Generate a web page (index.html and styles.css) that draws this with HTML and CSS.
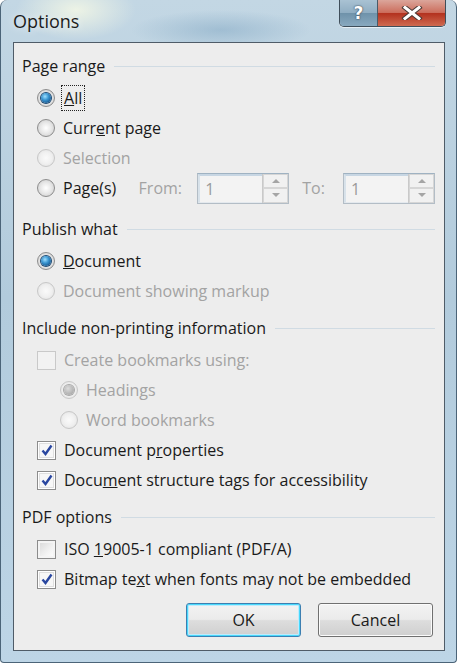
FILE: index.html
```html
<!DOCTYPE html>
<html>
<head>
<meta charset="utf-8">
<link rel="stylesheet" href="styles.css">
</head>
<body>
<div class="window">
  <div class="titlebar">
    <span class="title">Options</span>
    <div class="caption-btns">
      <div class="cap-help">?</div>
      <div class="cap-close">
        <svg width="22" height="14" viewBox="0 0 22 14"><path d="M4 1.5 L18 12.5 M18 1.5 L4 12.5" stroke="#4a3a36" stroke-width="5" stroke-linecap="square"/><path d="M4 1.5 L18 12.5 M18 1.5 L4 12.5" stroke="#ffffff" stroke-width="3" stroke-linecap="square"/></svg>
      </div>
    </div>
  </div>
  <div class="client">
    <section class="group group-range">
      <div class="group-head">Page range</div>
      <div class="row"><span class="radio checked"></span><span class="label"><span class="focus"><u>A</u>ll</span></span></div>
      <div class="row"><span class="radio"></span><span class="label">Curr<u>e</u>nt page</span></div>
      <div class="row disabled"><span class="radio"></span><span class="label">Selection</span></div>
      <div class="row">
        <span class="radio"></span><span class="label lbl-pages">Pa<u>g</u>e(s)</span>
        <span class="label lbl-from dim">From:</span>
        <div class="spinner"><span class="spin-field">1</span><span class="spin-btns"><span class="spin-up"></span><span class="spin-down"></span></span></div>
        <span class="label lbl-to dim">To:</span>
        <div class="spinner"><span class="spin-field">1</span><span class="spin-btns"><span class="spin-up"></span><span class="spin-down"></span></span></div>
      </div>
    </section>
    <section class="group">
      <div class="group-head">Publish what</div>
      <div class="row"><span class="radio checked"></span><span class="label"><u>D</u>ocument</span></div>
      <div class="row disabled"><span class="radio"></span><span class="label">Document showing markup</span></div>
    </section>
    <section class="group">
      <div class="group-head">Include non-printing information</div>
      <div class="row disabled"><span class="check"></span><span class="label">Create bookmarks using:</span></div>
      <div class="row nested disabled"><span class="radio checked"></span><span class="label">Headings</span></div>
      <div class="row nested disabled"><span class="radio"></span><span class="label">Word bookmarks</span></div>
      <div class="row"><span class="check checked"><svg width="14" height="14" viewBox="0 0 14 14"><path d="M2.5 7.5 L5.5 11 L11.5 2.5" fill="none" stroke="#2a47a0" stroke-width="2.4"/></svg></span><span class="label">Document p<u>r</u>operties</span></div>
      <div class="row"><span class="check checked"><svg width="14" height="14" viewBox="0 0 14 14"><path d="M2.5 7.5 L5.5 11 L11.5 2.5" fill="none" stroke="#2a47a0" stroke-width="2.4"/></svg></span><span class="label">Docu<u>m</u>ent structure tags for accessibility</span></div>
    </section>
    <section class="group">
      <div class="group-head">PDF options</div>
      <div class="row"><span class="check"></span><span class="label">ISO <u>1</u>9005-1 compliant (PDF/A)</span></div>
      <div class="row"><span class="check checked"><svg width="14" height="14" viewBox="0 0 14 14"><path d="M2.5 7.5 L5.5 11 L11.5 2.5" fill="none" stroke="#2a47a0" stroke-width="2.4"/></svg></span><span class="label">Bitmap te<u>x</u>t when fonts may not be embedded</span></div>
    </section>
    <div class="actions">
      <button class="btn btn-default">OK</button>
      <button class="btn">Cancel</button>
    </div>
  </div>
</div>
</body>
</html>
```
FILE: styles.css
```css
html, body {
  margin: 0;
  padding: 0;
}
body {
  width: 457px;
  height: 663px;
  overflow: hidden;
  font-family: "Open Sans", "Noto Sans", sans-serif;
  font-size: 16px;
  color: #1a1a1a;
}
.window {
  box-sizing: border-box;
  width: 457px;
  height: 663px;
  display: flex;
  flex-direction: column;
  padding: 0 11px 11px 12px;
  border-radius: 7px 7px 4px 4px;
  border: 1px solid #4b6478;
  border-top: none;
  background:
    radial-gradient(ellipse 60px 30px at 75px 10px, rgba(255,255,230,0.7), rgba(255,255,255,0) 100%),
    radial-gradient(ellipse 90px 20px at 220px 30px, rgba(120,160,190,0.45), rgba(255,255,255,0) 100%),
    linear-gradient(180deg, #c3d7e4 0%, #b2cbdc 45%, #bdd5e6 100%);
}
.titlebar {
  height: 42px;
  display: flex;
  align-items: flex-start;
  flex: none;
  margin-right: -1px;
}
.title {
  margin-top: 9px;
  margin-left: 0;
  font-size: 18px;
  color: #1c1c1c;
  text-shadow: 0 0 8px rgba(255,255,255,0.9);
}
.caption-btns {
  margin-left: auto;
  display: flex;
  height: 26px;
  border: 1px solid #3f4e5a;
  border-top: none;
  border-radius: 0 0 5px 5px;
  overflow: hidden;
  box-shadow: 0 1px 0 rgba(255,255,255,0.6);
}
.cap-help {
  width: 37px;
  display: flex;
  justify-content: center;
  align-items: center;
  font-family: "DejaVu Sans", sans-serif;
  font-weight: bold;
  font-size: 17px;
  color: #ffffff;
  text-shadow: 0 0 2px #3a4a58, 0 0 1px #3a4a58;
  background: linear-gradient(180deg, #a9c2d3 0%, #8fadc2 50%, #6f92aa 51%, #88a9bf 100%);
  border-right: 1px solid #4a5b68;
}
.cap-close {
  width: 67px;
  display: flex;
  justify-content: center;
  align-items: center;
  background: linear-gradient(180deg, #dba69b 0%, #cc6e5d 48%, #b3321f 52%, #cf6a50 100%);
}
.client {
  flex: 1;
  box-sizing: border-box;
  border: 1px solid #4f5c68;
  background: #ededed;
  padding: 11px 9px 0 8px;
  display: flex;
  flex-direction: column;
}
.group {
  display: flex;
  flex-direction: column;
  margin-top: 10px;
}
.group:first-child {
  margin-top: 0;
}
.group-range {
  padding-bottom: 4px;
}
.group-head {
  height: 24px;
  display: flex;
  align-items: center;
  margin-bottom: 5px;
  color: #1a1a1a;
}
.group-head::after {
  content: "";
  flex: 1;
  height: 1px;
  margin-left: 9px;
  background: #d0dbe3;
}
.row {
  height: 30px;
  display: flex;
  align-items: center;
  padding-left: 15px;
}
.row.nested {
  padding-left: 38px;
}
.label {
  margin-left: 8px;
  white-space: nowrap;
}
.disabled .label,
.dim {
  color: #a3a3a3;
}
.focus {
  outline: 1px dotted #222;
  outline-offset: 1px;
  padding: 0 1px;
}
.radio {
  box-sizing: border-box;
  width: 18px;
  height: 18px;
  border-radius: 50%;
  border: 1px solid #8c8c8c;
  background: radial-gradient(circle at 50% 50%, #ffffff 0%, #e9e9e9 45%, #c9c9c9 100%);
  display: flex;
  align-items: center;
  justify-content: center;
  flex: none;
}
.radio.checked::after {
  content: "";
  width: 10px;
  height: 10px;
  border-radius: 50%;
  background: radial-gradient(circle at 40% 35%, #9fe0ff 0%, #3a95d0 40%, #0f4d86 85%);
  box-shadow: 0 0 0 1px #1e4b75;
}
.disabled .radio {
  border-color: #c7c7c7;
  background: radial-gradient(circle at 50% 50%, #fafafa 0%, #f0f0f0 50%, #dedede 100%);
}
.disabled .radio.checked::after {
  background: radial-gradient(circle at 40% 35%, #dcdcdc 0%, #b5b5b5 60%, #9a9a9a 100%);
  box-shadow: 0 0 0 1px #a8a8a8;
}
.check {
  box-sizing: border-box;
  width: 19px;
  height: 19px;
  border: 1px solid #8c8c8c;
  background: linear-gradient(135deg, #d6d6d6 0%, #f2f2f2 60%, #ffffff 100%);
  box-shadow: inset 0 0 0 2px #f4f4f4;
  display: flex;
  align-items: center;
  justify-content: center;
  flex: none;
}
.check.checked {
  background: #f7f7f7;
  box-shadow: inset 0 0 0 1px #ffffff, inset 0 0 0 2px #dfdfdf;
}
.disabled .check {
  border-color: #c9c9c9;
  background: #f2f2f2;
  box-shadow: none;
}
.lbl-pages {
  width: 68px;
}
.lbl-from {
  margin-left: 8px;
  width: 59px;
}
.lbl-to {
  margin-left: 13px;
  width: 41px;
}
.spinner {
  box-sizing: border-box;
  width: 92px;
  height: 31px;
  display: flex;
  border: 1px solid #b3bdc6;
  border-top-color: #9fb2c2;
  background: #f3f3f3;
  flex: none;
}
.spin-field {
  flex: 1;
  display: flex;
  align-items: center;
  padding-left: 5px;
  color: #9a9a9a;
  border-top: 2px solid #c7d6e3;
  border-left: 2px solid #d8e2ea;
  border-bottom: 1px solid #e4e9ee;
}
.spin-btns {
  width: 25px;
  display: flex;
  flex-direction: column;
  border-left: 1px solid #c9c9c9;
  background: #f1f1f1;
}
.spin-up,
.spin-down {
  flex: 1;
  display: flex;
  align-items: center;
  justify-content: center;
  border: 1px solid #d6d6d6;
}
.spin-up::after {
  content: "";
  border-left: 4px solid transparent;
  border-right: 4px solid transparent;
  border-bottom: 4px solid #a5a5a5;
}
.spin-down::after {
  content: "";
  border-left: 4px solid transparent;
  border-right: 4px solid transparent;
  border-top: 4px solid #a5a5a5;
}
.actions {
  display: flex;
  justify-content: flex-end;
  gap: 17px;
  margin-top: 9px;
  padding-right: 2px;
}
.btn {
  box-sizing: border-box;
  width: 115px;
  height: 34px;
  font-family: "Open Sans", "Noto Sans", sans-serif;
  font-size: 16px;
  color: #1a1a1a;
  border: 1px solid #707070;
  border-radius: 3px;
  background: linear-gradient(180deg, #f3f3f3 0%, #ebebeb 48%, #dddddd 52%, #cfcfcf 100%);
  box-shadow: inset 0 0 0 1px #fbfbfb;
  padding: 0;
}
.btn-default {
  border-color: #3c7fb1;
  box-shadow: inset 0 0 0 1px #48d8fb, inset 0 0 0 2px #bfeafc;
}
```
